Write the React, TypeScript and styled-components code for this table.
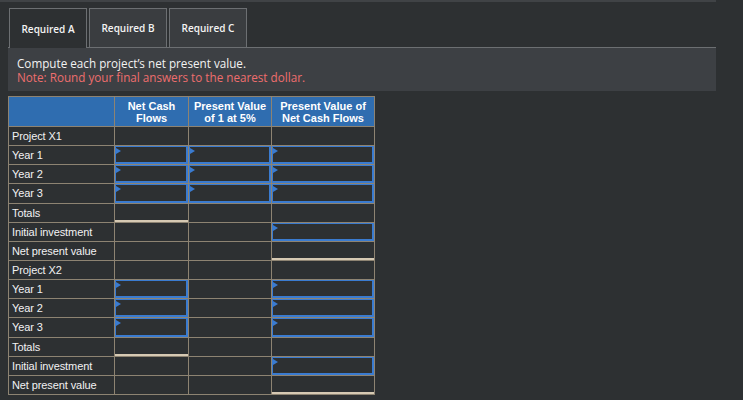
import React from "react";
import styled, { createGlobalStyle, css } from "styled-components";

const Global = createGlobalStyle`
  html, body { margin: 0; padding: 0; background: #2d3032; }
  body { font-family: "Open Sans", sans-serif; }
`;

const TopLine = styled.div`
  width: 716px;
  height: 2px;
  background: #404346;
`;

const Main = styled.div`
  width: 708px;
  margin-left: 8px;
`;

const Tabs = styled.div`
  display: flex;
  gap: 2px;
  padding-left: 1px;
  margin-top: 6px;
  position: relative;
  z-index: 1;
`;

const Tab = styled.div<{ $active?: boolean }>`
  box-sizing: border-box;
  width: 78px;
  height: 39px;
  display: flex;
  align-items: center;
  justify-content: center;
  font-family: "Open Sans", sans-serif;
  font-size: 10px;
  font-weight: 600;
  color: #f4f4f4;
  border: 1px solid #6c6f72;
  border-bottom: none;
  background: #3a3d40;
  ${(p) =>
    p.$active &&
    css`
      background: #2d3032;
      height: 40px;
      margin-bottom: -1px;
    `}
`;

const Panel = styled.div`
  box-sizing: border-box;
  height: 44px;
  background: #3d4044;
  border-top: 1px solid #6c6f72;
  padding: 9px 9px 0;
  font-family: "Open Sans", sans-serif;
  font-size: 11.7px;
  line-height: 13.5px;
  color: #f2f2f2;
`;

const Note = styled.div`
  color: #ee6e6e;
`;

const Table = styled.table`
  margin-top: 5px;
  border-collapse: collapse;
  width: 366px;
  font-family: "Liberation Sans", Arial, sans-serif;
  font-size: 11px;
  color: #f2f2f2;
  table-layout: fixed;
`;

const Th = styled.th`
  background: #2f6db0;
  border: 1px solid #8d8372;
  height: 29px;
  padding: 0 2px;
  font-weight: bold;
  font-size: 11px;
  line-height: 12px;
  text-align: center;
  color: #ffffff;
  vertical-align: middle;
`;

const Tr = styled.tr`
  height: 19.15px;
`;

const Label = styled.td`
  border: 1px solid #8d8372;
  padding: 0 0 0 3px;
  letter-spacing: -0.1px;
  white-space: nowrap;
  vertical-align: middle;
`;

const Cell = styled.td<{ $total?: boolean }>`
  border: 1px solid #8d8372;
  padding: 0;
  position: relative;
  ${(p) =>
    p.$total &&
    css`
      &::after {
        content: "";
        position: absolute;
        left: 0;
        right: 0;
        bottom: 0;
        height: 2px;
        background: #d6c9b3;
      }
    `}
`;

const InputBox = styled.div`
  position: absolute;
  inset: 0;
  box-sizing: border-box;
  border: 2px solid #3a7bd0;
  border-top-width: 1px;
  border-left-width: 1px;
  &::before {
    content: "";
    position: absolute;
    left: 0;
    top: 1px;
    border-left: 5px solid #3a7bd0;
    border-top: 3px solid transparent;
    border-bottom: 3px solid transparent;
  }
`;

type CellKind = "" | "i" | "t";
type Row = [string, CellKind, CellKind, CellKind];

const rows: Row[] = [
  ["Project X1", "", "", ""],
  ["Year 1", "i", "i", "i"],
  ["Year 2", "i", "i", "i"],
  ["Year 3", "i", "i", "i"],
  ["Totals", "t", "", ""],
  ["Initial investment", "", "", "i"],
  ["Net present value", "", "", "t"],
  ["Project X2", "", "", ""],
  ["Year 1", "i", "", "i"],
  ["Year 2", "i", "", "i"],
  ["Year 3", "i", "", "i"],
  ["Totals", "t", "", ""],
  ["Initial investment", "", "", "i"],
  ["Net present value", "", "", "t"],
];

export default function App() {
  return (
    <>
      <Global />
      <TopLine />
      <Main>
        <Tabs>
          <Tab $active>Required A</Tab>
          <Tab>Required B</Tab>
          <Tab>Required C</Tab>
        </Tabs>
        <Panel>
          <div>Compute each project’s net present value.</div>
          <Note>Note: Round your final answers to the nearest dollar.</Note>
        </Panel>
        <Table>
          <colgroup>
            <col style={{ width: 106 }} />
            <col style={{ width: 74 }} />
            <col style={{ width: 83 }} />
            <col style={{ width: 103 }} />
          </colgroup>
          <thead>
            <tr>
              <Th></Th>
              <Th>
                Net Cash
                <br />
                Flows
              </Th>
              <Th>
                Present Value
                <br />
                of 1 at 5%
              </Th>
              <Th>
                Present Value of
                <br />
                Net Cash Flows
              </Th>
            </tr>
          </thead>
          <tbody>
            {rows.map((r, i) => (
              <Tr key={i}>
                <Label>{r[0]}</Label>
                {[r[1], r[2], r[3]].map((k, j) => (
                  <Cell key={j} $total={k === "t"}>
                    {k === "i" && <InputBox />}
                  </Cell>
                ))}
              </Tr>
            ))}
          </tbody>
        </Table>
      </Main>
    </>
  );
}
